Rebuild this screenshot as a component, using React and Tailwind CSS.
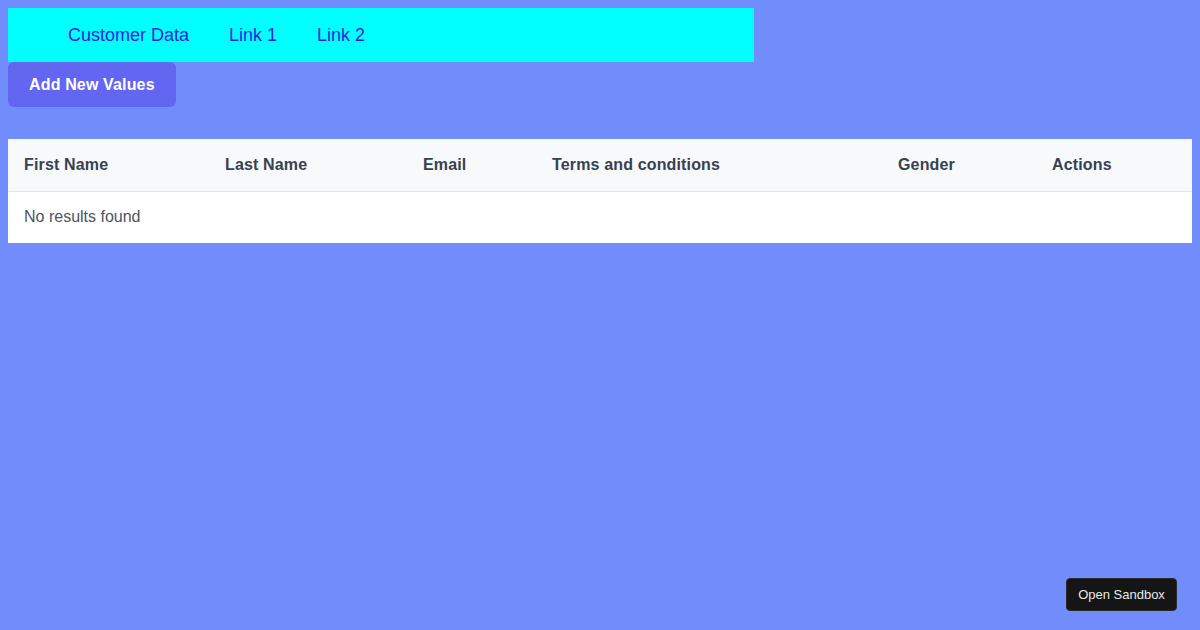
import React from "react";

const columns = [
  { label: "First Name", width: "w-[201px]" },
  { label: "Last Name", width: "w-[198px]" },
  { label: "Email", width: "w-[129px]" },
  { label: "Terms and conditions", width: "w-[346px]" },
  { label: "Gender", width: "w-[154px]" },
  { label: "Actions", width: "" },
];

const NavBar = () => (
  <nav className="w-[746px] h-[54px] bg-[#00ffff] flex items-center pl-[60px] gap-[40px] text-[18px] text-[#2a1fe0]">
    <a href="#">Customer Data</a>
    <a href="#">Link 1</a>
    <a href="#">Link 2</a>
  </nav>
);

const App = () => {
  return (
    <div
      className="min-h-screen bg-[#718dfc] p-2 relative"
      style={{ fontFamily: '"Liberation Sans", Arial, sans-serif' }}
    >
      <NavBar />
      <button className="h-[45px] px-[21px] rounded-md bg-[#6366f1] text-white font-bold text-base tracking-[0.15px] flex items-center">
        Add New Values
      </button>

      {/* Table */}
      <div className="mt-8 bg-white">
        <table className="w-full border-collapse text-left">
          <thead className="bg-[#f8f9fb]">
            <tr className="border-b border-[#e2e5ea]">
              {columns.map((col) => (
                <th
                  key={col.label}
                  className={`${col.width} px-4 pt-px h-[52px] text-base font-bold tracking-[0.15px] text-[#374151]`}
                >
                  {col.label}
                </th>
              ))}
            </tr>
          </thead>
          <tbody>
            <tr>
              <td colSpan={6} className="px-4 h-[52px] text-base text-[#4b5563]">
                No results found
              </td>
            </tr>
          </tbody>
        </table>
      </div>

      <button
        className="absolute right-[23px] bottom-[19px] w-[111px] h-[33px] rounded-[4px] bg-[#151515] border border-[#2a2a2a] text-[13px] text-[#e8e8e8]"
      >
        Open Sandbox
      </button>
    </div>
  );
};

export default App;
